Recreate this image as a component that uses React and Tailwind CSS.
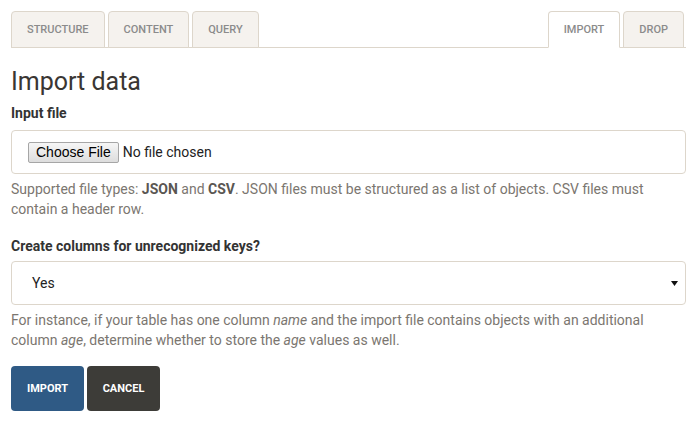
import React from 'react';

const LEFT_TABS = ['Structure', 'Content', 'Query'];
const RIGHT_TABS = [
  { label: 'Import', active: true },
  { label: 'Drop', active: false },
];

function Tab({ label, active }) {
  return (
    <div
      className={`-mb-px h-[37px] px-[15px] flex items-center rounded-t-[4px] border text-[11px] font-medium uppercase text-[#8b8b8b] ${
        active ? 'bg-white border-[#ddd6cb] border-b-white' : 'bg-[#f5f2ee] border-[#ddd6cb]'
      }`}
    >
      {label}
    </div>
  );
}

export default function App() {
  return (
    <div className="w-[698px] h-[425px] bg-white pl-[11px] pr-[12px] pt-[11px] font-['Roboto',sans-serif] text-[14px] leading-[20px] text-[#333]">
      {/* Tabs */}
      <div className="flex border-b border-[#ddd6cb]">
        <div className="flex gap-[3px]">
          {LEFT_TABS.map(t => <Tab key={t} label={t} />)}
        </div>
        <div className="ml-auto flex gap-[3px] mr-[2px]">
          {RIGHT_TABS.map(t => <Tab key={t.label} label={t.label} active={t.active} />)}
        </div>
      </div>

      <h3 className="mt-[20px] mb-[7px] text-[25px] leading-[28px] text-[#3a3633]">Import data</h3>

      {/* Input file */}
      <label className="block font-bold mb-[7px]">Input file</label>
      <div className="h-[44px] border border-[#ddd6cb] rounded-[4px] flex items-center pl-[16px]">
        <span className="h-[21px] px-[7px] flex items-center border border-[#a6a6a6] rounded-[2px] bg-gradient-to-b from-[#f6f6f6] to-[#dddddd] font-['Liberation_Sans',Arial,sans-serif] text-[14px] text-black">
          Choose File
        </span>
        <span className="ml-[4px] text-[#222]">No file chosen</span>
      </div>
      <p className="mt-[5px] text-[#7b7670]">
        Supported file types: <b className="text-[#5a5652]">JSON</b> and <b className="text-[#5a5652]">CSV</b>. JSON files must be structured as a list of objects. CSV files must contain a header row.
      </p>

      {/* Unrecognized keys */}
      <label className="block font-bold mt-[17px] mb-[5px]">Create columns for unrecognized keys?</label>
      <div className="h-[44px] border border-[#ddd6cb] rounded-[4px] flex items-center pl-[20px] pr-[7px]">
        <span className="text-[#222]">Yes</span>
        <svg className="ml-auto" width="7" height="5" viewBox="0 0 7 5">
          <path d="M0 0h7L3.5 5z" fill="#111" />
        </svg>
      </div>
      <p className="mt-[5px] text-[#7b7670]">
        For instance, if your table has one column <i>name</i> and the import file contains objects with an additional column <i>age</i>, determine whether to store the <i>age</i> values as well.
      </p>

      {/* Actions */}
      <div className="mt-[16px] flex gap-[3px]">
        <button className="h-[45px] w-[73px] rounded-[4px] bg-[#2f5a85] text-white text-[11px] font-bold uppercase">Import</button>
        <button className="h-[45px] w-[73px] rounded-[4px] bg-[#3d3c38] text-white text-[11px] font-bold uppercase">Cancel</button>
      </div>
    </div>
  );
}
